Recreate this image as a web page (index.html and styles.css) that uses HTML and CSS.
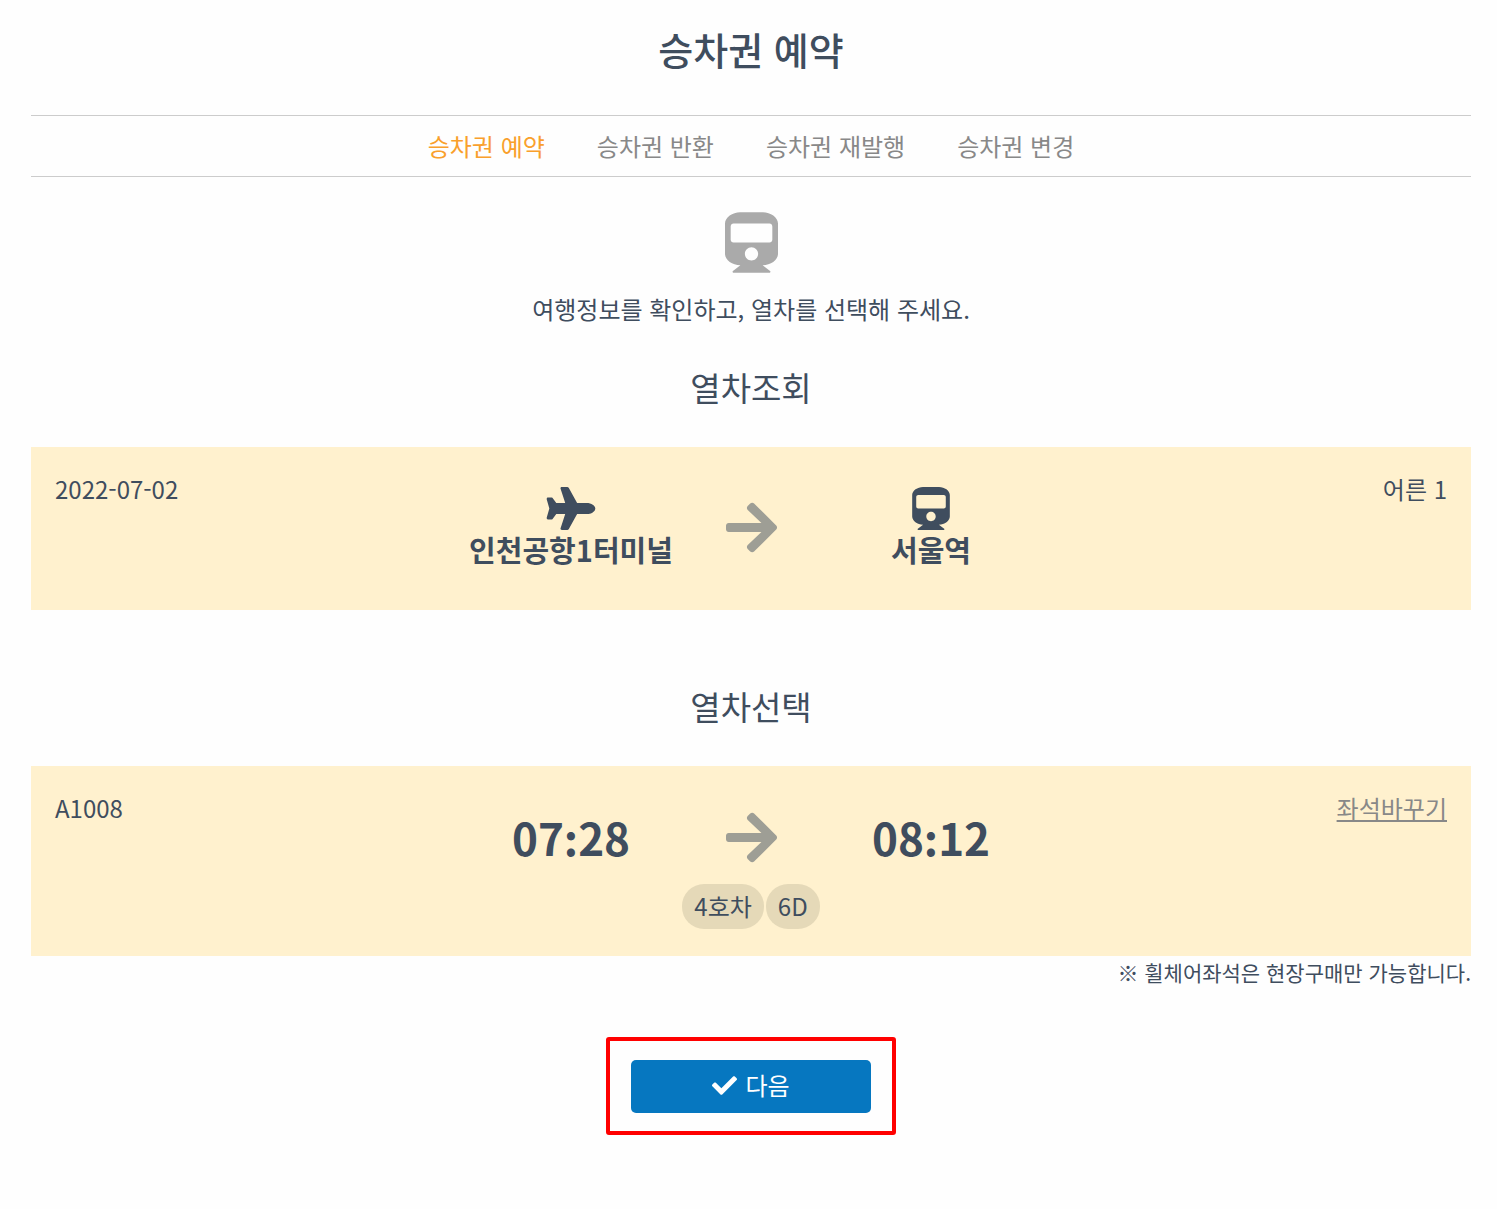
FILE: index.html
```html
<!DOCTYPE html>
<html lang="ko">
<head>
  <meta charset="UTF-8" />
  <meta name="viewport" content="width=device-width, initial-scale=1.0" />
  <title>승차권 예약</title>
  <link rel="stylesheet" href="styles.css">
</head>
<body>
  <!-- shared icons -->
  <svg class="icon-defs" aria-hidden="true">
    <symbol id="icon-train" viewBox="0 0 448 512">
      <path d="M448 96v256c0 51.8-61.6 96-130 96l63 49.7c5.9 4.7 2.6 14.3-5 14.3H72c-7.6 0-10.9-9.6-5-14.3l63-49.7C61.8 448 0 404 0 352V96C0 43 64 0 128 0h192c65 0 128 43 128 96zm-48 136V120c0-13.3-10.7-24-24-24H72c-13.3 0-24 10.7-24 24v112c0 13.3 10.7 24 24 24h304c13.3 0 24-10.7 24-24zm-176 64c-30.9 0-56 25.1-56 56s25.1 56 56 56 56-25.1 56-56-25.1-56-56-56z" />
    </symbol>
    <symbol id="icon-plane" viewBox="0 0 147 130">
      <path d="M121 48c14 0 26 8 26 17s-12 17-26 17H92L67 127c-1 2-3 3-5 3H46c-3 0-5-2-4-5l14-43H29L19 95c-1 2-2 3-4 3H4c-3 0-4-2-4-5l8-28L0 37c0-3 1-5 4-5h11c2 0 3 1 4 3l10 13h27L42 5c-1-3 1-5 4-5h16c2 0 4 1 5 3l25 45z" />
    </symbol>
    <symbol id="icon-arrow" viewBox="0 32 448 448">
      <path d="M190.5 66.9l22.2-22.2c9.4-9.4 24.6-9.4 33.9 0L441 239c9.4 9.4 9.4 24.6 0 33.9L246.6 467.3c-9.4 9.4-24.6 9.4-33.9 0l-22.2-22.2c-9.5-9.5-9.3-25 .4-34.3L311.4 296H24c-13.3 0-24-10.7-24-24v-32c0-13.3 10.7-24 24-24h287.4L190.9 101.2c-9.8-9.3-10-24.8-.4-34.3z" />
    </symbol>
    <symbol id="icon-check" viewBox="0 0 512 512">
      <path d="M173.9 439.4l-166.4-166.4c-10-10-10-26.2 0-36.2l36.2-36.2c10-10 26.2-10 36.2 0L192 312.7 432.1 72.6c10-10 26.2-10 36.2 0l36.2 36.2c10 10 10 26.2 0 36.2l-294.4 294.4c-10 10-26.2 10-36.2 0z" />
    </symbol>
  </svg>

  <div class="container">
    <header>
      <h1>승차권 예약</h1>
      <nav class="tabs">
        <a href="#" class="active" aria-current="page">승차권 예약</a>
        <a href="#">승차권 반환</a>
        <a href="#">승차권 재발행</a>
        <a href="#">승차권 변경</a>
      </nav>
    </header>

    <main>
      <div class="intro">
        <svg class="intro-icon" aria-hidden="true"><use href="#icon-train" /></svg>
        <p>여행정보를 확인하고, 열차를 선택해 주세요.</p>
      </div>

      <section>
        <h2>열차조회</h2>
        <div class="card">
          <span class="card-left">2022-07-02</span>
          <div class="route">
            <div class="station">
              <svg class="plane-icon" aria-hidden="true"><use href="#icon-plane" /></svg>
              <strong>인천공항1터미널</strong>
            </div>
            <svg class="arrow-icon" aria-hidden="true"><use href="#icon-arrow" /></svg>
            <div class="station">
              <svg class="train-icon" aria-hidden="true"><use href="#icon-train" /></svg>
              <strong>서울역</strong>
            </div>
          </div>
          <span class="card-right">어른 1</span>
        </div>
      </section>

      <section class="select-section">
        <h2>열차선택</h2>
        <div class="card">
          <span class="card-left">A1008</span>
          <div class="schedule">
            <div class="route">
              <strong class="time" lang="en">07:28</strong>
              <svg class="arrow-icon" aria-hidden="true"><use href="#icon-arrow" /></svg>
              <strong class="time" lang="en">08:12</strong>
            </div>
            <div class="seats">
              <span class="seat">4호차</span>
              <span class="seat">6D</span>
            </div>
          </div>
          <a href="#" class="card-right">좌석바꾸기</a>
        </div>
        <p class="note">※ 휠체어좌석은 현장구매만 가능합니다.</p>
      </section>

      <div class="actions">
        <button type="button" class="next-btn">
          <svg class="check-icon" aria-hidden="true"><use href="#icon-check" /></svg>
          다음
        </button>
      </div>
    </main>
  </div>
</body>
</html>
```
FILE: styles.css
```css
* {
  margin: 0;
  padding: 0;
  box-sizing: border-box;
}

body {
  background: #fefefe;
  color: #3f4d5e;
  font-family: 'Noto Sans CJK KR', sans-serif;
  font-size: 24px;
  line-height: 36px;
}

svg {
  display: block;
  fill: currentColor;
}

.icon-defs {
  position: absolute;
  width: 0;
  height: 0;
}

.container {
  padding: 20px 26px 72px 31px;
}

h1 {
  font-size: 38px;
  font-weight: 500;
  line-height: 57px;
  text-align: center;
}

.tabs {
  display: flex;
  justify-content: center;
  flex-wrap: wrap;
  gap: 0 52px;
  margin-top: 38px;
  padding: 12px 0;
  border-top: 1px solid #ccc;
  border-bottom: 1px solid #ccc;
}

.tabs a {
  color: #888;
  text-decoration: none;
}

.tabs .active {
  color: #f9a02c;
}

.intro {
  display: flex;
  flex-direction: column;
  align-items: center;
  gap: 18px;
  padding-top: 35px;
  text-align: center;
}

.intro-icon {
  width: 53px;
  height: 61px;
  color: #aaa;
}

h2 {
  margin: 36px 0;
  font-size: 33px;
  font-weight: 400;
  line-height: 48px;
  text-align: center;
}

.select-section {
  padding-top: 36px;
}

.card {
  display: flex;
  justify-content: space-between;
  padding: 24px 24px 27px;
  background: #fff1ce;
}

.card-left,
.card-right {
  flex: 1;
}

.card-right {
  text-align: right;
}

a.card-right {
  color: #888;
}

.route {
  display: grid;
  grid-template-columns: 240px 120px 240px;
  align-items: center;
  justify-items: center;
  min-height: 112px;
}

.station {
  display: flex;
  flex-direction: column;
  align-items: center;
  gap: 1px;
  font-size: 29px;
}

.plane-icon {
  width: 50px;
  height: 43px;
}

.train-icon {
  width: 38px;
  height: 43px;
}

.arrow-icon {
  width: 51px;
  height: 51px;
  opacity: 0.5;
}

.schedule .route {
  min-height: 94px;
}

/* keep the colon on the baseline between digits */
.time {
  font-family: 'Noto Sans CJK JP', sans-serif;
  font-size: 44px;
  font-feature-settings: 'locl' 0, 'calt' 0;
  line-height: 60px;
}

.seats {
  display: flex;
  justify-content: center;
  gap: 2px;
}

.seat {
  padding: 4px 12px 5px;
  border-radius: 22px;
  background: #e5d9b8;
}

.note {
  font-size: 21px;
  line-height: 32px;
  text-align: right;
}

.actions {
  display: flex;
  justify-content: center;
  width: 290px;
  margin: 49px auto 0;
  padding: 19px 0 18px;
  border: 4px solid #f00;
  border-radius: 3px;
}

.next-btn {
  display: flex;
  align-items: center;
  justify-content: center;
  gap: 8px;
  width: 240px;
  height: 53px;
  padding-bottom: 3px;
  border: none;
  border-radius: 5px;
  background: #0677c0;
  color: #fff;
  font: inherit;
  cursor: pointer;
}

.check-icon {
  width: 25px;
  height: 25px;
}
```
